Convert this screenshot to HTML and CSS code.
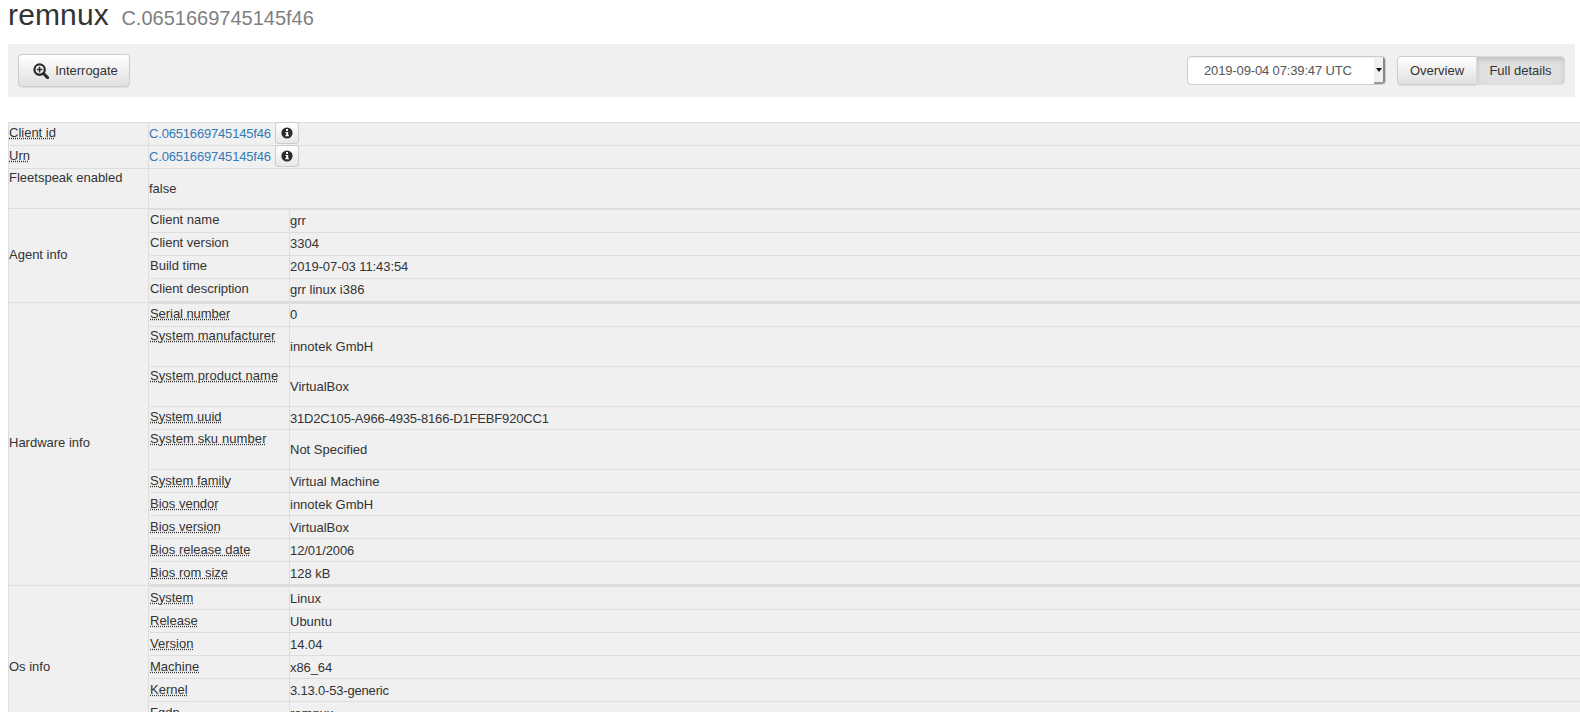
FILE: index.html
```html
<!DOCTYPE html>
<html lang="en">
<head>
<meta charset="utf-8">
<title>remnux</title>
<link rel="stylesheet" href="styles.css">
</head>
<body>
<h1 class="title">remnux <small class="title-id">C.0651669745145f46</small></h1>
<div class="toolbar">
  <button class="btn btn-main" type="button">
    <svg class="zoom-icon" viewBox="0 0 16 16" width="16" height="16" aria-hidden="true"><circle cx="6.6" cy="6.6" r="5.2" fill="none" stroke="#2b2b2b" stroke-width="2.200"/><path d="M10.500 10.500 14.600 14.600" stroke="#2b2b2b" stroke-width="3" stroke-linecap="round"/><path d="M6.600 3.800v5.600M3.800 6.600h5.600" stroke="#2b2b2b" stroke-width="1.500"/></svg>
    <span class="btn-label">Interrogate</span>
  </button>
  <div class="toolbar-right">
    <div class="select-box">
      <span class="select-value">2019-09-04 07:39:47 UTC</span>
      <span class="select-arrow"><span class="caret"></span></span>
    </div>
    <div class="btn-group">
      <button class="btn seg" type="button">Overview</button>
      <button class="btn seg seg-active" type="button">Full details</button>
    </div>
  </div>
</div>

<table class="details">
  <tr class="r23 up"><td class="k"><abbr>Client id</abbr></td><td class="v"><a class="tight" href="#">C.0651669745145f46</a> <button class="info" type="button"><svg viewBox="0 0 12 12" width="12" height="12" aria-hidden="true"><circle cx="6" cy="6" r="5.600" fill="#2b2b2b"/><rect x="5" y="2" width="2" height="2" fill="#fff"/><path d="M4.400 5h2.800v3.200h.8v1.100H4.200V8.200h1V6.100h-.8z" fill="#fff"/></svg></button></td></tr>
  <tr class="r23 up"><td class="k"><abbr>Urn</abbr></td><td class="v"><a class="tight" href="#">C.0651669745145f46</a> <button class="info" type="button"><svg viewBox="0 0 12 12" width="12" height="12" aria-hidden="true"><circle cx="6" cy="6" r="5.600" fill="#2b2b2b"/><rect x="5" y="2" width="2" height="2" fill="#fff"/><path d="M4.400 5h2.800v3.200h.8v1.100H4.200V8.200h1V6.100h-.8z" fill="#fff"/></svg></button></td></tr>
  <tr class="r40"><td class="k top">Fleetspeak enabled</td><td class="v">false</td></tr>
  <tr>
    <td class="k k-up">Agent info</td>
    <td class="nest">
      <table class="inner">
        <tr class="r23"><td class="ik">Client name</td><td class="iv">grr</td></tr>
        <tr class="r23"><td class="ik">Client version</td><td class="iv">3304</td></tr>
        <tr class="r23"><td class="ik">Build time</td><td class="iv tight1">2019-07-03 11:43:54</td></tr>
        <tr class="r23"><td class="ik narrow">Client description</td><td class="iv">grr linux i386</td></tr>
      </table>
    </td>
  </tr>
  <tr>
    <td class="k k-up">Hardware info</td>
    <td class="nest">
      <table class="inner">
        <tr class="r23"><td class="ik narrow"><abbr>Serial number</abbr></td><td class="iv">0</td></tr>
        <tr class="r40"><td class="ik wide"><abbr>System manufacturer</abbr></td><td class="iv">innotek GmbH</td></tr>
        <tr class="r40"><td class="ik wide"><abbr>System product name</abbr></td><td class="iv">VirtualBox</td></tr>
        <tr class="r23 lo-v"><td class="ik"><abbr>System uuid</abbr></td><td class="iv tight">31D2C105-A966-4935-8166-D1FEBF920CC1</td></tr>
        <tr class="r40"><td class="ik wide"><abbr>System sku number</abbr></td><td class="iv">Not Specified</td></tr>
        <tr class="r23 lo"><td class="ik"><abbr>System family</abbr></td><td class="iv">Virtual Machine</td></tr>
        <tr class="r23 lo"><td class="ik"><abbr>Bios vendor</abbr></td><td class="iv">innotek GmbH</td></tr>
        <tr class="r23 lo"><td class="ik"><abbr>Bios version</abbr></td><td class="iv">VirtualBox</td></tr>
        <tr class="r23 lo"><td class="ik"><abbr>Bios release date</abbr></td><td class="iv tight1">12/01/2006</td></tr>
        <tr class="r23 lo"><td class="ik"><abbr>Bios rom size</abbr></td><td class="iv">128 kB</td></tr>
      </table>
    </td>
  </tr>
  <tr>
    <td class="k">Os info</td>
    <td class="nest">
      <table class="inner">
        <tr class="r23 lo"><td class="ik"><abbr>System</abbr></td><td class="iv">Linux</td></tr>
        <tr class="r23 lo"><td class="ik"><abbr>Release</abbr></td><td class="iv">Ubuntu</td></tr>
        <tr class="r23 lo"><td class="ik"><abbr>Version</abbr></td><td class="iv">14.04</td></tr>
        <tr class="r23 lo"><td class="ik"><abbr>Machine</abbr></td><td class="iv tight1">x86_64</td></tr>
        <tr class="r23 lo"><td class="ik"><abbr>Kernel</abbr></td><td class="iv tight">3.13.0-53-generic</td></tr>
        <tr class="r23 lo"><td class="ik"><abbr>Fqdn</abbr></td><td class="iv">remnux</td></tr>
        <tr class="r23 lo"><td class="ik"><abbr>Install date</abbr></td><td class="iv">2015-06-01 12:00:00</td></tr>
      </table>
    </td>
  </tr>
</table>
</body>
</html>
```
FILE: styles.css
```css
html, body { margin: 0; padding: 0; height: 712px; overflow: hidden; background: #fff; }
body { padding: 0 0 0 8px; font: 13px/18px "Liberation Sans", Arial, sans-serif; color: #333; box-sizing: border-box; width: 1580px; }
.title { margin: 0; height: 44px; font-size: 30px; line-height: 30px; font-weight: 400; color: #333; letter-spacing: .15px; }
.title-id { margin-left: 4px; font-size: 20px; font-weight: 400; color: #7f7f7f; letter-spacing: 0; }
.toolbar { width: 1567px; height: 53px; box-sizing: border-box; background: #f0f0f0; padding: 10px; display: flex; justify-content: space-between; align-items: flex-start; margin-bottom: 25px; }
.toolbar-right { display: flex; gap: 11px; margin-top: 2px; }
.btn { font: 13px/18px "Liberation Sans", Arial, sans-serif; color: #333; border: 1px solid #ccc; border-radius: 4px; background: linear-gradient(#fff, #e0e0e0); box-shadow: inset 0 1px 0 rgba(255,255,255,.15), 0 1px 1px rgba(0,0,0,.075); padding: 0; }
.btn-main { width: 112px; height: 33px; display: flex; align-items: center; justify-content: center; gap: 6px; padding-left: 3px; }
.btn-label { letter-spacing: -.02px; }
.zoom-icon { display: block; }
.select-box { width: 199px; height: 29px; box-sizing: border-box; border: 1px solid #ccc; border-radius: 4px; background: #fff; display: flex; box-shadow: inset 0 1px 1px rgba(0,0,0,.075); overflow: hidden; }
.select-value { flex: 1; padding-left: 16px; line-height: 27px; color: #555; letter-spacing: -.14px; }
.select-arrow { width: 11px; background: #f0f0f0; display: flex; align-items: center; justify-content: center; border-right: 2px solid #888; border-bottom: 2px solid #999; box-sizing: border-box; }
.caret { width: 0; height: 0; border-left: 3.500px solid transparent; border-right: 3.500px solid transparent; border-top: 4px solid #111; }
.btn-group { display: flex; }
.seg { height: 29px; }
.seg:first-child { width: 80px; border-radius: 4px 0 0 4px; }
.seg-active { width: 89px; margin-left: -1px; border-radius: 0 4px 4px 0; background: #e0e0e0; border-color: #dbdbdb; box-shadow: inset 0 3px 5px rgba(0,0,0,.125); }
.details { border-collapse: separate; border-spacing: 0; width: 1620px; background: #f0f0f0; table-layout: fixed; }
.details > tbody > tr > td { border-top: 1px solid #ddd; border-left: 1px solid #ddd; padding: 0; }
.details > tbody > tr > .k { width: 139px; }
.details > tbody > tr > .k.top { vertical-align: top; }
.details > tbody > tr > .k-up { padding-bottom: 2px; }
.details > tbody > .r23 > td { height: 22px; }
.details > tbody > .r40 > td { height: 39px; }
.details > tbody > .up > td { height: 20px; padding-bottom: 2px; }
.inner { border-collapse: separate; border-spacing: 0; width: calc(100% - 1px); table-layout: fixed; border-top: 2px solid #ddd; border-bottom: 2px solid #ddd; margin: -1px 0 -1px 1px; }
.inner td { padding: 0; border-top: 1px solid #ddd; height: 22px; }
.inner .r40 td { height: 39px; }
.inner tr:first-child td { border-top: 0; }
.ik { width: 139px; vertical-align: top; line-height: 18px; }
.inner .r23 .ik { padding-top: 1px; height: 21px; }
.inner .lo .ik { padding-top: 2px; height: 20px; }
.iv { border-left: 1px solid #ddd; vertical-align: middle; }
.inner .lo .iv, .inner .lo-v .iv { padding-top: 2px; height: 20px; }
.tight { letter-spacing: -.18px; }
.tight1 { letter-spacing: -.08px; }
.wide { letter-spacing: .1px; }
.narrow { letter-spacing: -.06px; }
abbr { text-decoration: underline dotted #333; text-underline-offset: 1px; }
a { color: #337ab7; text-decoration: none; }
.v a { vertical-align: middle; }
.info { width: 24px; height: 22px; margin: -3px 0 -3px 1px; vertical-align: middle; box-sizing: border-box; padding: 0; border: 1px solid #ccc; border-radius: 3px; background: linear-gradient(#fff, #e8e8e8); display: inline-flex; align-items: center; justify-content: center; }
```
